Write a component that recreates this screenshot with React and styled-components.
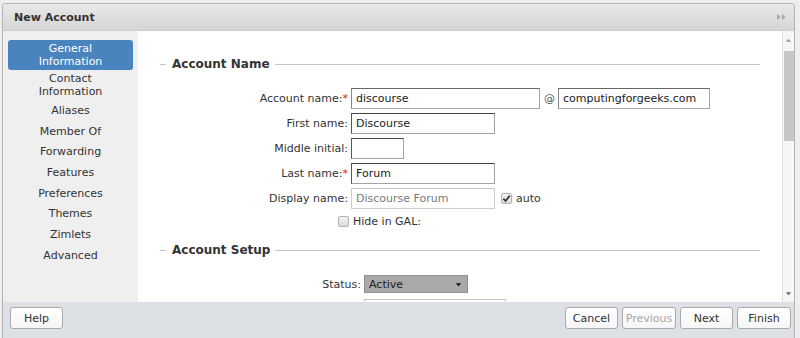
import React from 'react'
import styled, { createGlobalStyle } from 'styled-components'

const GlobalStyle = createGlobalStyle`
  html, body {
    margin: 0;
    padding: 0;
    background: #eeeeee;
    font-family: "DejaVu Sans", Verdana, sans-serif;
    font-size: 11px;
    color: #333;
  }
`

const Dialog = styled.div`
  margin: 3px 5px 0 2px;
  width: 793px;
  height: 335px;
  box-sizing: border-box;
  border: 1px solid #b4b4b4;
  border-bottom: none;
  border-radius: 4px 4px 0 0;
  display: flex;
  flex-direction: column;
  overflow: hidden;
  background: #fff;
`

const TitleBar = styled.div`
  height: 27px;
  flex: none;
  display: flex;
  align-items: center;
  justify-content: space-between;
  padding: 0 8px 0 11px;
  background: linear-gradient(#e9e9e9, #d5d5d5);
  border-bottom: 1px solid #cfcfcf;
  box-sizing: border-box;
`

const Title = styled.div`
  font-weight: bold;
  font-size: 11px;
  color: #333;
`

const Body = styled.div`
  height: 271px;
  flex: none;
  display: flex;
`

const Nav = styled.div`
  width: 135px;
  flex: none;
  background: #efefef;
  padding: 9px 5px 0 5px;
  box-sizing: border-box;
`

const NavItem = styled.div`
  box-sizing: border-box;
  min-height: 20.7px;
  padding: 2px 4px;
  line-height: 13px;
  text-align: center;
  font-size: 11px;
  border-radius: 3px;
  display: flex;
  align-items: center;
  justify-content: center;
  color: ${p => (p.$active ? '#fff' : '#333')};
  background: ${p => (p.$active ? '#4a84bf' : 'transparent')};
`

const Content = styled.div`
  flex: 1;
  overflow: hidden;
  padding: 25px 22px 0 22px;
  box-sizing: border-box;
`

const Legend = styled.div`
  display: flex;
  align-items: center;
  height: 16px;
  margin-top: ${p => p.$top || 0}px;
  &::before {
    content: '';
    width: 6px;
    height: 1px;
    background: #c4c4c4;
  }
  &::after {
    content: '';
    flex: 1;
    height: 1px;
    background: #c4c4c4;
  }
`

const LegendText = styled.span`
  font-weight: bold;
  font-size: 12px;
  color: #333;
  margin: 0 5px 0 6px;
`

const Form = styled.div`
  display: grid;
  grid-template-columns: ${p => p.$label}px auto;
  column-gap: 3px;
  row-gap: ${p => p.$gap}px;
  align-items: center;
  margin-top: ${p => p.$top}px;
`

const Label = styled.div`
  text-align: right;
  white-space: nowrap;
  color: #333;
`

const Req = styled.span`
  color: #d42020;
`

const Controls = styled.div`
  display: flex;
  align-items: center;
  gap: 4px;
`

const Input = styled.div`
  box-sizing: border-box;
  width: ${p => p.$w}px;
  height: 21px;
  border: 1px solid ${p => (p.$soft ? '#cdcdcd' : '#a3a3a3')};
  border-top-color: ${p => (p.$soft ? '#c4c4c4' : p.$dark ? '#444' : '#666')};
  border-left-color: ${p => (p.$soft ? '#cdcdcd' : p.$dark ? '#555' : '#888')};
  padding: 0 4px;
  line-height: 19px;
  color: ${p => (p.$soft ? '#7a7a7a' : '#222')};
  background: #fff;
  white-space: nowrap;
  overflow: hidden;
`

const At = styled.span`
  color: #555;
  margin: 0 -1px 0 0;
`

const CheckBox = styled.span`
  box-sizing: border-box;
  width: 11px;
  height: 11px;
  border: 1px solid #b3b3b3;
  border-radius: 2px;
  background: linear-gradient(#f2f2f2, #dcdcdc);
  display: inline-flex;
  align-items: center;
  justify-content: center;
  flex: none;
`

const CheckRow = styled.div`
  display: flex;
  align-items: center;
  gap: 4px;
  margin-left: ${p => p.$left || 0}px;
  margin-top: ${p => p.$top || 0}px;
  height: 16px;
`

const Select = styled.div`
  box-sizing: border-box;
  width: 104px;
  height: 18px;
  background: #a9a9a9;
  border: 1px solid #939393;
  display: flex;
  align-items: center;
  justify-content: space-between;
  padding: 0 5px 0 4px;
  color: #222;
`

const ScrollBar = styled.div`
  width: 12px;
  flex: none;
  background: #f6f6f6;
  border-left: 1px solid #e2e2e2;
  box-sizing: border-box;
  display: flex;
  flex-direction: column;
  align-items: center;
`

const Thumb = styled.div`
  width: 10px;
  height: 90px;
  background: #c6c6c6;
  margin-top: 4px;
`

const Spacer = styled.div`
  flex: 1;
`

const Footer = styled.div`
  height: 36px;
  flex: none;
  background: #dde1e6;
  display: flex;
  align-items: flex-start;
  padding: 5px 3px 0 7px;
  box-sizing: border-box;
  gap: 4px;
`

const Button = styled.div`
  box-sizing: border-box;
  width: ${p => p.$w || 53}px;
  height: 22px;
  border: 1px solid #a9a9a9;
  border-radius: 3px;
  background: linear-gradient(#ffffff, #f6f6f6);
  display: flex;
  align-items: center;
  justify-content: center;
  color: ${p => (p.$disabled ? '#a6a6a6' : '#333')};
  font-size: 11px;
`

const Tri = ({ dir = 'down', color = '#333', size = 7 }) => (
  <svg width={size} height={size} viewBox="0 0 8 8">
    {dir === 'down' && <path d="M1 2.5 L7 2.5 L4 6 Z" fill={color} />}
    {dir === 'up' && <path d="M1 5.5 L7 5.5 L4 2 Z" fill={color} />}
  </svg>
)

const Check = () => (
  <svg width="9" height="9" viewBox="0 0 10 10">
    <path d="M1.5 5.2 L4 7.8 L8.7 1.8" fill="none" stroke="#333" strokeWidth="1.9" />
  </svg>
)

const Collapse = () => (
  <svg width="9" height="6" viewBox="0 0 9 6">
    <path d="M0 0 L3.5 3 L0 6 Z M5 0 L8.5 3 L5 6 Z" fill="#a8a8a8" />
  </svg>
)

const navItems = [
  ['General', 'Information'],
  ['Contact', 'Information'],
  ['Aliases'],
  ['Member Of'],
  ['Forwarding'],
  ['Features'],
  ['Preferences'],
  ['Themes'],
  ['Zimlets'],
  ['Advanced'],
]

export default function App() {
  return (
    <>
      <GlobalStyle />
      <Dialog>
        <TitleBar>
          <Title>New Account</Title>
          <Collapse />
        </TitleBar>
        <Body>
          <Nav>
            {navItems.map((lines, i) => (
              <NavItem key={i} $active={i === 0}>
                <div>
                  {lines.map((l, j) => (
                    <div key={j}>{l}</div>
                  ))}
                </div>
              </NavItem>
            ))}
          </Nav>
          <Content>
            <Legend>
              <LegendText>Account Name</LegendText>
            </Legend>
            <Form $label={188} $gap={4} $top={16}>
              <Label>
                Account name:<Req>*</Req>
              </Label>
              <Controls>
                <Input $w={189}>discourse</Input>
                <At>@</At>
                <Input $w={152}>computingforgeeks.com</Input>
              </Controls>
              <Label>First name:</Label>
              <Controls>
                <Input $w={144} $dark>Discourse</Input>
              </Controls>
              <Label>Middle initial:</Label>
              <Controls>
                <Input $w={53} $dark></Input>
              </Controls>
              <Label>
                Last name:<Req>*</Req>
              </Label>
              <Controls>
                <Input $w={144} $dark>Forum</Input>
              </Controls>
              <Label>Display name:</Label>
              <Controls>
                <Input $w={144} $soft>Discourse Forum</Input>
                <CheckRow $left={2}>
                  <CheckBox>
                    <Check />
                  </CheckBox>
                  <span>auto</span>
                </CheckRow>
              </Controls>
            </Form>
            <CheckRow $left={178} $top={4}>
              <CheckBox />
              <span>Hide in GAL:</span>
            </CheckRow>
            <Legend $top={13}>
              <LegendText>Account Setup</LegendText>
            </Legend>
            <Form $label={201} $gap={6} $top={17}>
              <Label>Status:</Label>
              <Controls>
                <Select>
                  <span>Active</span>
                  <Tri dir="down" color="#111" />
                </Select>
              </Controls>
              <Label></Label>
              <Controls>
                <Input $w={142} $soft></Input>
              </Controls>
            </Form>
          </Content>
          <ScrollBar>
            <div style={{ marginTop: 3 }}>
              <Tri dir="up" color="#999" />
            </div>
            <Thumb />
            <Spacer />
            <div style={{ marginBottom: 2 }}>
              <Tri dir="down" color="#666" />
            </div>
          </ScrollBar>
        </Body>
        <Footer>
          <Button>Help</Button>
          <Spacer />
          <Button>Cancel</Button>
          <Button $w={54} $disabled>Previous</Button>
          <Button>Next</Button>
          <Button $w={54}>Finish</Button>
        </Footer>
      </Dialog>
    </>
  )
}
